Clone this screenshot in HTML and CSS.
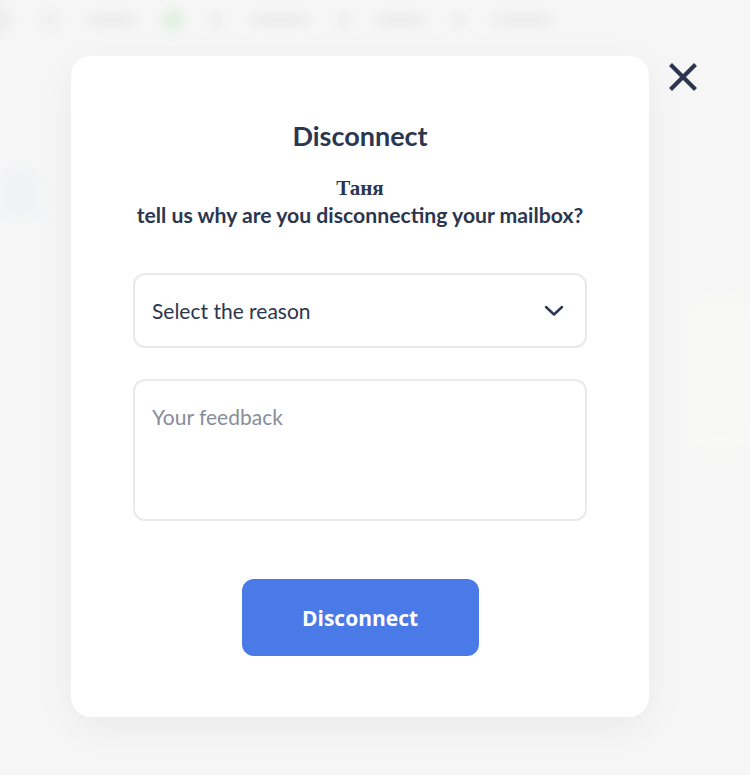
FILE: index.html
```html
<!DOCTYPE html>
<html lang="en">
<head>
  <meta charset="UTF-8">
  <title>Disconnect</title>
  <link rel="stylesheet" href="styles.css">
</head>
<body>
  <div class="backdrop">
    <div class="topbar">
      <span class="dot"></span>
      <span class="dot ring"></span>
      <span class="bar"></span>
      <span class="dot green"></span>
      <span class="dot small"></span>
      <span class="bar wide"></span>
      <span class="dot small"></span>
      <span class="bar"></span>
      <span class="dot small"></span>
      <span class="bar wide"></span>
    </div>
    <div class="app-body">
      <div class="side-card"></div>
      <div class="right-card"></div>
    </div>
  </div>

  <div class="overlay">
    <div class="modal">
      <h1>Disconnect</h1>
      <p class="name">Таня</p>
      <p class="question">tell us why are you disconnecting your mailbox?</p>

      <div class="select">
        <span>Select the reason</span>
        <svg width="20" height="12" viewBox="0 0 20 12">
          <path d="M2 2 L10 9.5 L18 2" fill="none" stroke="#2b3650" stroke-width="2.4" stroke-linecap="round" stroke-linejoin="round"/>
        </svg>
      </div>

      <textarea class="feedback" placeholder="Your feedback"></textarea>

      <button class="submit">Disconnect</button>
    </div>
    <button class="close" aria-label="Close">
      <svg width="28" height="28" viewBox="0 0 28 28">
        <path d="M3 3 L25 25 M25 3 L3 25" stroke="#2b3650" stroke-width="4.2" stroke-linecap="square"/>
      </svg>
    </button>
  </div>
</body>
</html>
```

FILE: styles.css
```css
body {
  margin: 0;
  width: 750px;
  height: 775px;
  overflow: hidden;
  background: #f6f6f6;
  font-family: Lato, "Open Sans", sans-serif;
  color: #2b3650;
}
.backdrop {
  height: 775px;
  filter: blur(6px);
  opacity: 0.6;
}
.topbar {
  display: flex;
  align-items: center;
  gap: 26px;
  height: 40px;
  margin-left: -10px;
}
.dot {
  width: 22px;
  height: 22px;
  border-radius: 50%;
  background: #e6e6e6;
}
.dot.ring {
  background: #ececec;
}
.dot.green {
  background: #cfeccf;
}
.dot.small {
  width: 14px;
  height: 14px;
}
.bar {
  width: 50px;
  height: 8px;
  border-radius: 4px;
  background: #dedede;
}
.bar.wide {
  width: 60px;
}
.app-body {
  display: flex;
  justify-content: space-between;
  padding-top: 130px;
}
.side-card {
  width: 40px;
  height: 50px;
  border-radius: 6px;
  background: #eef0f4;
}
.right-card {
  width: 60px;
  height: 150px;
  margin-top: 130px;
  border-radius: 14px;
  background: #fafaf6;
}
.overlay {
  position: absolute;
  top: 0;
  left: 0;
  width: 750px;
  height: 775px;
}
.modal {
  position: absolute;
  top: 56px;
  left: 71px;
  width: 578px;
  height: 661px;
  box-sizing: border-box;
  padding: 119px 62px 0;
  background: #fff;
  border-radius: 20px;
  box-shadow: 0 10px 40px rgba(0, 0, 0, 0.05);
  display: flex;
  flex-direction: column;
  align-items: center;
}
h1 {
  position: absolute;
  top: 63px;
  left: 0;
  right: 0;
  margin: 0;
  text-align: center;
  font-size: 27px;
  font-weight: 700;
  line-height: 34px;
}
.name {
  margin: 0;
  font-family: "Liberation Serif", serif;
  font-weight: 700;
  font-size: 21px;
  line-height: 26px;
}
.question {
  margin: 0;
  font-weight: 700;
  font-size: 21.2px;
  line-height: 28px;
  white-space: nowrap;
}
.select {
  margin-top: 44px;
  width: 454px;
  height: 75px;
  box-sizing: border-box;
  border: 2px solid #e8e9ec;
  border-radius: 12px;
  display: flex;
  align-items: center;
  justify-content: space-between;
  padding: 0 21px 0 17px;
  font-size: 21px;
}
.feedback {
  margin-top: 31px;
  width: 454px;
  height: 142px;
  box-sizing: border-box;
  border: 2px solid #e8e9ec;
  border-radius: 12px;
  padding: 23px 17px;
  font-family: Lato, sans-serif;
  font-size: 21px;
  resize: none;
  color: #2b3650;
}
.feedback::placeholder {
  color: #878d99;
}
.submit {
  margin-top: 58px;
  width: 237px;
  height: 77px;
  border: none;
  border-radius: 12px;
  background: #4a79e8;
  color: #fff;
  font-family: "Open Sans", sans-serif;
  font-weight: 700;
  font-size: 21px;
}
.close {
  position: absolute;
  top: 63px;
  left: 669px;
  padding: 0;
  border: none;
  background: none;
  width: 28px;
  height: 28px;
}
```
